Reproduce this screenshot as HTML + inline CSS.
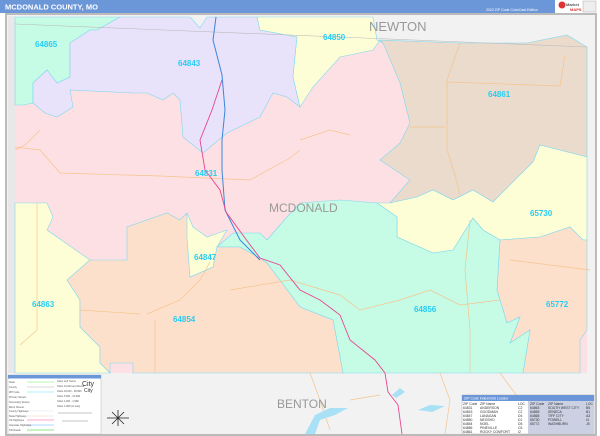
<!DOCTYPE html>
<html><head><meta charset="utf-8"><style>
html,body{margin:0;padding:0;background:#fff}
body{width:600px;height:436px;overflow:hidden;position:relative;font-family:"Liberation Sans",sans-serif}
</style></head><body>
<svg width="600" height="436" viewBox="0 0 600 436" xmlns="http://www.w3.org/2000/svg" style="position:absolute;left:0;top:0">
<rect x="0" y="0" width="600" height="436" fill="#fff"/>
<!-- header -->
<rect x="0" y="0" width="555" height="13" fill="#6b96d8"/>
<text x="5" y="9.5" font-size="7.5" font-weight="bold" fill="#fff" font-family="Liberation Sans">MCDONALD COUNTY, MO</text>
<text x="486" y="11" font-size="3.5" fill="#fff" font-family="Liberation Sans">2022 ZIP Code ColorCast Edition</text>
<rect x="556" y="0" width="44" height="13" fill="#fff"/>
<circle cx="562" cy="5" r="3.5" fill="#d33"/>
<text x="566" y="6" font-size="4" font-weight="bold" fill="#555">Market</text>
<text x="570" y="11" font-size="4" font-weight="bold" fill="#d33">MAPS</text>
<rect x="583" y="1" width="13" height="11" fill="#eee" stroke="#999" stroke-width="0.4"/>
<!-- frame -->
<rect x="6" y="14" width="590" height="421" fill="#f2f2f2" stroke="#bbb" stroke-width="2"/>
<rect x="8" y="16" width="7" height="357" fill="#e8e8e8"/>
<!-- base gray -->
<rect x="15" y="17" width="579" height="356" fill="#f2f2f2"/>
<!-- pink base -->
<polygon points="15,17 587,47 587,373 15,373" fill="#fde0e3"/>
<!-- Newton gray top right -->
<polygon points="373,17 594,17 594,373 587,373 587,47 567,35 527,43 460,43 377,40" fill="#f2f2f2"/>
<!-- green 64865 -->
<polygon points="15,17 120,17 97,30 90,30 70,43 70,77 57,83 47,70 33,83 33,103 23,105 15,105" fill="#c6fbe6" stroke="#7fd8ef" stroke-width="0.6"/>
<!-- purple 64843 -->
<polygon points="120,17 190,17 200,28 207,17 257,17 260,30 297,37 293,77 300,107 287,97 273,93 260,117 227,133 203,153 183,137 180,100 173,93 163,100 147,93 133,93 70,90 73,107 57,117 45,113 33,103 33,83 47,70 57,83 70,77 70,43 90,30 97,30" fill="#e9e2fb" stroke="#7fd8ef" stroke-width="0.6"/>
<!-- yellow 64850 -->
<polygon points="257,17 373,17 377,40 383,43 380,40 373,50 340,57 313,87 300,107 293,77 297,37 260,30" fill="#fefed6" stroke="#7fd8ef" stroke-width="0.6"/>
<!-- brown 64861 -->
<polygon points="380,40 460,43 527,43 567,35 587,47 587,157 540,145 533,162 493,202 473,190 453,200 433,190 417,197 390,203 410,180 380,160 400,143 410,123 400,83 383,43" fill="#eadbcc" stroke="#7fd8ef" stroke-width="0.6"/>
<!-- yellow 65730 -->
<polygon points="377,203 390,203 417,197 433,190 453,200 473,190 493,202 533,162 540,145 587,157 587,240 583,240 570,227 540,237 500,240 483,230 473,218 453,250 433,253 397,237 397,217" fill="#fefed6" stroke="#7fd8ef" stroke-width="0.6"/>
<!-- orange 65772 -->
<polygon points="500,240 540,237 570,227 583,240 587,240 587,330 580,340 580,373 523,373 530,330 510,343 520,317 507,323 497,290" fill="#fde0cc" stroke="#7fd8ef" stroke-width="0.6"/>
<!-- green 64856 -->
<polygon points="300,203 340,200 377,203 397,217 397,237 433,253 453,250 473,218 483,230 500,240 497,290 507,323 520,317 510,343 530,330 523,373 343,373 333,320 300,307 267,263 260,258 240,247 217,247 233,233 260,233 267,240 287,217" fill="#c6fbe6" stroke="#7fd8ef" stroke-width="0.6"/>
<!-- yellow 64863 -->
<polygon points="15,203 47,203 53,217 47,230 90,260 67,280 80,300 80,327 100,347 100,363 110,373 15,373" fill="#fefed6" stroke="#7fd8ef" stroke-width="0.6"/>
<!-- orange 64854 -->
<polygon points="90,260 127,260 127,227 167,213 180,220 187,213 190,277 213,267 217,247 240,247 260,258 267,263 300,307 333,320 343,373 133,373 133,363 110,363 110,373 100,363 100,347 80,327 80,300 67,280" fill="#fde0cc" stroke="#7fd8ef" stroke-width="0.6"/>
<!-- yellow 64847 -->
<polygon points="187,213 193,227 207,237 227,230 217,247 213,267 190,277 187,237" fill="#fefed6" stroke="#7fd8ef" stroke-width="0.6"/>
<!-- county boundary line at top -->
<line x1="15" y1="24" x2="587" y2="47" stroke="#bbb" stroke-width="0.6"/>
<!-- roads -->
<g fill="none" stroke="#f5c48d" stroke-width="0.7">
<path d="M15,147 L40,150 L60,173 L160,176 L205,178 L250,180 L290,158 L300,150"/>
<path d="M40,130 L25,145 L15,150"/>
<path d="M37,203 L37,330 L20,345"/>
<path d="M147,314 L180,300 L200,280 L210,262"/>
<path d="M155,320 L155,373"/>
<path d="M80,310 L140,314"/>
<path d="M230,290 L290,280 L340,295 L360,310 L400,300 L430,290 L460,305 L500,300"/>
<path d="M460,43 L447,80 L447,150 L455,175 L460,195"/>
<path d="M447,82 L560,86 L565,55"/>
<path d="M410,127 L445,127"/>
<path d="M470,220 L465,270 L470,330 L470,373"/>
<path d="M510,260 L590,270"/>
<path d="M300,140 L330,130 L350,135"/>
<path d="M310,373 L320,400 L330,430"/>
<path d="M350,400 L380,395"/>
<path d="M440,373 L450,400 L445,434"/>
<path d="M500,373 L520,400"/>
</g>
<path d="M216,17 L213,40 L222,75 L225,110 L222,140 L222,170 L225,210 L240,240 L260,260" fill="none" stroke="#3a86d8" stroke-width="1"/>
<path d="M222,80 L212,110 L200,140 L205,170 L220,190 L226,212 L245,238 L260,258 L280,265 L300,290 L320,300 L340,315 L350,340 L375,360 L385,373 L388,392 L398,405 L402,434" fill="none" stroke="#e8458f" stroke-width="0.9"/>
<!-- water -->
<g fill="#a8e0f5">
<path d="M305,434 L315,415 L330,408 L348,408 L335,415 L320,420 L315,434 Z"/>
<path d="M418,410 L430,405 L445,406 L432,412 Z"/>
<path d="M392,395 L400,388 L405,392 L396,398 Z"/>
</g>
<!-- labels -->
<g font-family="Liberation Sans" font-weight="bold" font-size="8" fill="#28cdf2">
<text x="35" y="47">64865</text>
<text x="178" y="66">64843</text>
<text x="323" y="40">64850</text>
<text x="488" y="97">64861</text>
<text x="195" y="176">64831</text>
<text x="530" y="216">65730</text>
<text x="194" y="260">64847</text>
<text x="32" y="307">64863</text>
<text x="173" y="322">64854</text>
<text x="414" y="312">64856</text>
<text x="546" y="307">65772</text>
</g>
<g font-family="Liberation Sans" fill="#999">
<text x="369" y="31" font-size="13">NEWTON</text>
<text x="269" y="212" font-size="12">MCDONALD</text>
<text x="277" y="408" font-size="12">BENTON</text>
</g>
<!-- legend -->
<rect x="8" y="375" width="93" height="59" fill="#fff" stroke="#aaa" stroke-width="0.4"/>
<rect x="8" y="375" width="93" height="3.5" fill="#6b96d8"/>
<g stroke-width="0.8">
<line x1="27" y1="382" x2="54" y2="382" stroke="#9ef59e"/>
<line x1="27" y1="387" x2="54" y2="387" stroke="#ccc"/>
<line x1="27" y1="392" x2="54" y2="392" stroke="#9ef"/>
<line x1="27" y1="411" x2="54" y2="411" stroke="#eee"/>
<line x1="27" y1="416" x2="54" y2="416" stroke="#fdc"/>
<line x1="27" y1="420" x2="54" y2="420" stroke="#f8b"/>
<line x1="27" y1="425" x2="54" y2="425" stroke="#9cf"/>
<line x1="27" y1="430" x2="54" y2="430" stroke="#6d6"/>
</g>
<g font-size="2.5" fill="#555">
<text x="9" y="383">State</text><text x="9" y="388">County</text><text x="9" y="393">ZIP Code</text>
<text x="9" y="398">Primary Streets</text><text x="9" y="403">Secondary Streets</text><text x="9" y="408">Minor Streets</text>
<text x="9" y="412">County Highways</text><text x="9" y="417">State Highways</text><text x="9" y="421">US Highways</text>
<text x="9" y="426">Interstate Highways</text><text x="9" y="431">Toll Roads</text>
<text x="57" y="382">Cities and Towns</text><text x="57" y="387">Cities 10,000 and Above</text>
<text x="57" y="392">Cities 25,000 - 99,999</text><text x="57" y="397">Cities 5,000 - 24,999</text>
<text x="57" y="402">Cities 1,000 - 4,999</text><text x="57" y="407">Cities 1-999 (or less)</text>
</g>
<text x="82" y="386" font-size="7" fill="#333">City</text>
<text x="84" y="392" font-size="5" fill="#333">City</text>
<line x1="58" y1="413" x2="92" y2="413" stroke="#888" stroke-width="0.5"/>
<line x1="62" y1="421" x2="88" y2="421" stroke="#888" stroke-width="0.5"/>
<!-- compass -->
<g stroke="#222" stroke-width="0.8"><line x1="118" y1="410" x2="118" y2="426"/><line x1="107" y1="418" x2="129" y2="418"/><line x1="112" y1="412" x2="124" y2="424"/><line x1="124" y1="412" x2="112" y2="424"/></g>
<!-- index -->
<rect x="462" y="395" width="132" height="39" fill="#fff" stroke="#999" stroke-width="0.4"/>
<rect x="528" y="401" width="66" height="33" fill="#cbd1e2"/>
<rect x="462" y="395" width="132" height="6" fill="#6b96d8"/>
<text x="464" y="399.6" font-size="3.5" fill="#fff">ZIP Code Index/Grid Locator</text>
<g font-size="3.4" fill="#333">
<text x="463" y="405">ZIP Code</text><text x="480" y="405">ZIP Name</text><text x="518" y="405">LOC</text>
<text x="530" y="405">ZIP Code</text><text x="548" y="405">ZIP Name</text><text x="586" y="405">LOC</text>
<text x="463" y="409">64831</text><text x="480" y="409">ANDERSON</text><text x="518" y="409">C2</text>
<text x="463" y="413">64843</text><text x="480" y="413">GOODMAN</text><text x="518" y="413">C2</text>
<text x="463" y="417">64847</text><text x="480" y="417">LANAGAN</text><text x="518" y="417">D4</text>
<text x="463" y="421">64850</text><text x="480" y="421">NEOSHO</text><text x="518" y="421">D1</text>
<text x="463" y="425">64854</text><text x="480" y="425">NOEL</text><text x="518" y="425">D5</text>
<text x="463" y="429">64856</text><text x="480" y="429">PINEVILLE</text><text x="518" y="429">C6</text>
<text x="463" y="433">64861</text><text x="480" y="433">ROCKY COMFORT</text><text x="518" y="433">I2</text>
<text x="530" y="409">64863</text><text x="548" y="409">SOUTH WEST CITY</text><text x="586" y="409">B5</text>
<text x="530" y="413">64865</text><text x="548" y="413">SENECA</text><text x="586" y="413">B1</text>
<text x="530" y="417">64868</text><text x="548" y="417">TIFF CITY</text><text x="586" y="417">A3</text>
<text x="530" y="421">65730</text><text x="548" y="421">POWELL</text><text x="586" y="421">I4</text>
<text x="530" y="425">65772</text><text x="548" y="425">WASHBURN</text><text x="586" y="425">J5</text>
</g>
</svg>
</body></html>
